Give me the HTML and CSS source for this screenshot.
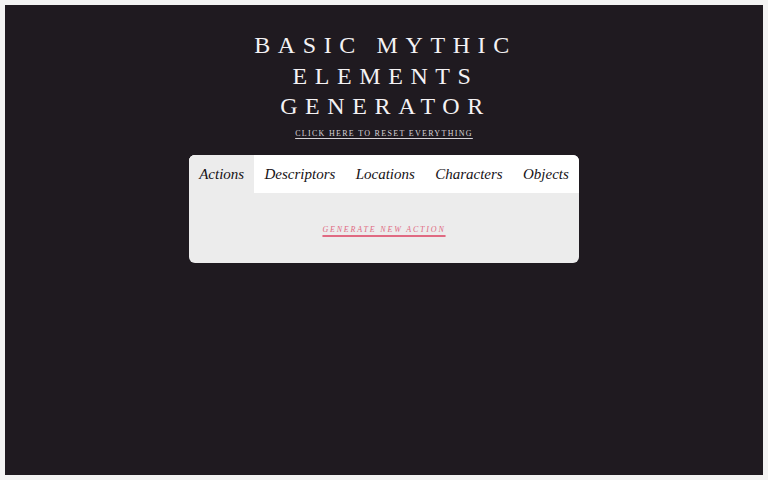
FILE: index.html
```html
<!DOCTYPE html>
<html lang="en">
<head>
    <meta charset="UTF-8">
    <meta name="viewport" content="width=device-width, initial-scale=1.0">
    <title>Basic Mythic Elements Generator</title>
    <link rel="stylesheet" href="styles.css">
</head>
<body>
    <div class="page">
        <h1 class="title">Basic Mythic<br>Elements<br>Generator</h1>
        <a class="reset" href="#">Click here to reset everything</a>

        <div class="card">
            <div class="tabs">
                <div class="tab active">Actions</div>
                <div class="tab">Descriptors</div>
                <div class="tab">Locations</div>
                <div class="tab">Characters</div>
                <div class="tab">Objects</div>
            </div>
            <div class="panel">
                <a class="generate" href="#">Generate new action</a>
            </div>
        </div>
    </div>
</body>
</html>
```

FILE: styles.css
```css
body {
    margin: 0;
    background: #f3f3f3;
    font-family: "Liberation Serif", "DejaVu Serif", serif;
}
.page {
    margin: 5px;
    height: 470px;
    background: #1f1a20;
    display: flex;
    flex-direction: column;
    align-items: center;
}
.title {
    margin: 25px 0 0 0;
    color: #f4f2f4;
    font-weight: normal;
    font-size: 24px;
    line-height: 30.5px;
    letter-spacing: 7.6px;
    text-transform: uppercase;
    text-align: center;
    padding-left: 3px;
}
.reset {
    margin-top: 7px;
    color: #d8d4d8;
    font-size: 8px;
    letter-spacing: 1.3px;
    text-transform: uppercase;
    text-decoration: underline;
    text-underline-offset: 2px;
}
.card {
    margin-top: 17px;
    width: 390px;
    border-radius: 6px;
    overflow: hidden;
    background: #ececec;
}
.tabs {
    display: flex;
    background: #fff;
    height: 38px;
}
.tab {
    flex: 1 1 auto;
    display: flex;
    align-items: center;
    justify-content: center;
    padding: 2px 10px 0;
    font-style: italic;
    font-size: 15px;
    color: #161216;
    cursor: pointer;
}
.tab.active {
    background: #ececec;
}
.panel {
    height: 70px;
    display: flex;
    justify-content: center;
    padding-top: 32px;
    box-sizing: border-box;
}
.generate {
    align-self: flex-start;
    color: #e06a82;
    font-style: italic;
    font-size: 8px;
    letter-spacing: 1.8px;
    text-transform: uppercase;
    text-decoration: underline;
    text-decoration-thickness: 1.5px;
    text-underline-offset: 3px;
}
```
